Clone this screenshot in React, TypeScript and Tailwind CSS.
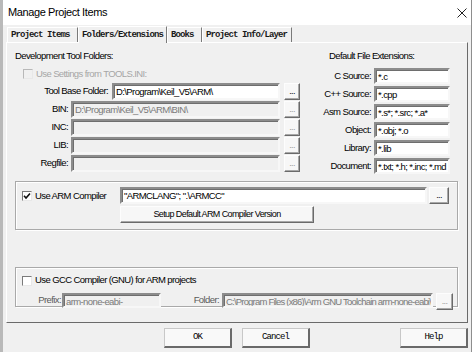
import React from 'react';

const sans = "font-['Liberation_Sans',Arial,sans-serif]";
const mono = "font-['Liberation_Mono','Courier_New',monospace]";

const field =
    "shrink-0 min-w-0 border-2 border-t-[#8c8c8c] border-l-[#8c8c8c] border-r-[#f7f7f7] border-b-[#f7f7f7] shadow-[inset_1px_1px_0_#6e6e6e] px-[2px] text-[9.5px] leading-[13px] tracking-[-0.6px] whitespace-nowrap overflow-hidden";
const fieldOn = field + " bg-white text-black";
const fieldOff = field + " bg-[#f0f0f0] text-[#7a7a7a]";

const dots =
    "shrink-0 flex items-center justify-center border border-t-[#fdfdfd] border-l-[#fdfdfd] border-r-[#6a6a6a] border-b-[#6a6a6a] shadow-[inset_-1px_-1px_0_#a8a8a8] bg-[#f7f7f7] text-[9px] leading-none";

const Check = ({ checked, disabled }: { checked?: boolean; disabled?: boolean }) => (
    <div
        className={`w-[10px] h-[10px] shrink-0 border border-t-[#7a7a7a] border-l-[#7a7a7a] border-r-[#e8e8e8] border-b-[#e8e8e8] flex items-center justify-center ${
            disabled ? 'bg-[#f0f0f0] border-t-[#b8b8b8] border-l-[#b8b8b8]' : 'bg-white'
        }`}
    >
        {checked && (
            <svg width="8" height="8" viewBox="0 0 8 8">
                <path d="M1 3.8 L3 6 L7 1.5" fill="none" stroke="#111" strokeWidth="1.6" />
            </svg>
        )}
    </div>
);

const folders = [
    { label: 'BIN:', value: 'D:\\Program\\Keil_V5\\ARM\\BIN\\' },
    { label: 'INC:', value: '' },
    { label: 'LIB:', value: '' },
    { label: 'Regfile:', value: '' },
];

const extensions = [
    { label: 'C Source:', value: '*.c' },
    { label: 'C++ Source:', value: '*.cpp' },
    { label: 'Asm Source:', value: '*.s*; *.src; *.a*' },
    { label: 'Object:', value: '*.obj; *.o' },
    { label: 'Library:', value: '*.lib' },
    { label: 'Document:', value: '*.txt; *.h; *.inc; *.md' },
];

const tabs = [
    { title: 'Project Items', w: 'w-[71px]' },
    { title: 'Folders/Extensions', w: 'w-[89px]', active: true },
    { title: 'Books', w: 'w-[35px]' },
    { title: 'Project Info/Layer', w: 'w-[90px]' },
];

const dlgButton =
    "w-[68px] h-[20px] flex items-center justify-center border border-t-[#c8c8c8] border-l-[#c8c8c8] border-r-2 border-b-2 border-r-[#6a6a6a] border-b-[#6a6a6a] bg-[#f9f9f9] text-[9px] tracking-[-0.9px] text-black";

export default function App() {
    return (
        <div className={`w-[474px] h-[352px] bg-white overflow-hidden ${sans}`}>
            <div className="w-[472px] h-[352px] flex flex-col bg-[#f0f0f0] border-l-[3px] border-l-[#b9b9b9] border-r border-r-[#8e8e8e]">
                {/* Title bar */}
                <div className="h-[25px] shrink-0 bg-white flex items-center justify-between pl-[5px] pr-[4px]">
                    <span className="text-[11px] tracking-[-0.4px] text-black">Manage Project Items</span>
                    <svg width="10" height="10" viewBox="0 0 10 10">
                        <path d="M0.5 0.5 L9.5 9.5 M9.5 0.5 L0.5 9.5" stroke="#222" strokeWidth="1" />
                    </svg>
                </div>

                {/* Tabs */}
                <div className="h-[17px] shrink-0 flex items-end pl-[4px] relative z-10">
                    {tabs.map((t) => (
                        <div
                            key={t.title}
                            className={`${t.w} flex items-center pl-[3px] pt-[1px] border-t border-l border-t-white border-l-white border-r border-r-[#7a7a7a] ${mono} font-bold text-[9px] tracking-[-0.9px] text-[#1a1a1a] ${
                                t.active ? 'h-[17px] -mb-[1px] bg-[#f0f0f0]' : 'h-[15px]'
                            }`}
                        >
                            {t.title}
                        </div>
                    ))}
                </div>

                {/* Panel */}
                <div className="ml-[3px] w-[462px] h-[281px] shrink-0 border border-t-white border-l-white border-r-[#6a6a6a] border-b-[#6a6a6a] flex flex-col text-[9.5px] tracking-[-0.6px] text-black">
                    <div className="h-[132px] flex">
                        {/* Development Tool Folders */}
                        <div className="w-[298px] flex flex-col">
                            <div className="mt-[7px] pl-[8px] leading-[12px]">Development Tool Folders:</div>
                            <div className="mt-[6px] pl-[16px] h-[12px] flex items-center gap-[3px] text-[#a6a6a6]">
                                <Check disabled />
                                <span>Use Settings from TOOLS.INI:</span>
                            </div>
                            <div className="mt-[3px] flex flex-col gap-[1px]">
                                <div className="flex items-center h-[17px]">
                                    <span className="w-[101px] shrink-0 text-right">Tool Base Folder:</span>
                                    <div className={`ml-[4px] w-[168px] h-[17px] ${fieldOn}`}>D:\Program\Keil_V5\ARM\</div>
                                    <div className={`ml-[4px] w-[16px] h-[17px] ${dots}`}>...</div>
                                </div>
                                {folders.map((f) => (
                                    <div key={f.label} className="flex items-center h-[17px]">
                                        <span className="w-[61px] shrink-0 text-right">{f.label}</span>
                                        <div className={`ml-[3px] w-[209px] h-[17px] ${fieldOff}`}>{f.value}</div>
                                        <div className={`ml-[4px] w-[16px] h-[17px] text-[#9a9a9a] ${dots}`}>...</div>
                                    </div>
                                ))}
                            </div>
                        </div>

                        {/* Default File Extensions */}
                        <div className="flex-1 flex flex-col">
                            <div className="mt-[7px] pl-[24px] leading-[12px]">Default File Extensions:</div>
                            <div className="mt-[6px] flex flex-col gap-[2px]">
                                {extensions.map((e) => (
                                    <div key={e.label} className="flex items-center h-[16px]">
                                        <span className="w-[66px] shrink-0 text-right">{e.label}</span>
                                        <div className={`ml-[3px] w-[76px] h-[16px] ${fieldOn}`}>{e.value}</div>
                                    </div>
                                ))}
                            </div>
                        </div>
                    </div>

                    {/* ARM compiler group */}
                    <div className="mt-[6px] ml-[8px] w-[443px] h-[49px] border border-[#a9a9a9] shadow-[inset_1px_1px_0_#fff,1px_1px_0_#fff] flex">
                        <div className="w-[104px] shrink-0 pl-[6px] pt-[9px] flex items-start gap-[3px]">
                            <Check checked />
                            <span className="leading-[10px]">Use ARM Compiler</span>
                        </div>
                        <div className="pt-[5px] flex flex-col gap-[2px]">
                            <div className="flex">
                                <div className={`w-[307px] h-[17px] ${fieldOn} bg-[#fbfbfb]`}>"ARMCLANG"; ".\ARMCC"</div>
                                <div className={`ml-[2px] w-[20px] h-[17px] ${dots}`}>...</div>
                            </div>
                            <div className={`w-[194px] h-[17px] ${dots} text-[9.5px] tracking-[-0.6px]`}>
                                Setup Default ARM Compiler Version
                            </div>
                        </div>
                    </div>

                    {/* GCC compiler group */}
                    <div className="mt-[37px] ml-[8px] w-[443px] h-[40px] border border-[#a9a9a9] shadow-[inset_1px_1px_0_#fff,1px_1px_0_#fff] flex flex-col">
                        <div className="mt-[7px] pl-[6px] h-[11px] flex items-center gap-[3px]">
                            <Check />
                            <span>Use GCC Compiler (GNU) for ARM projects</span>
                        </div>
                        <div className="mt-[5px] h-[15px] grid grid-cols-[45px_1px_99px_58px_3px_211px_3px_17px] items-center">
                            <span className="text-right text-[#5a5a5a]">Prefix:</span>
                            <span />
                            <div className={`h-[15px] ${fieldOff}`}>arm-none-eabi-</div>
                            <span className="text-right text-[#5a5a5a]">Folder:</span>
                            <span />
                            <div className={`h-[15px] ${fieldOff} px-[1px] tracking-[-0.8px]`}>
                                C:\Program Files (x86)\Arm GNU Toolchain arm-none-eabi\
                            </div>
                            <span />
                            <div className={`h-[17px] mt-[2px] text-[#9a9a9a] ${dots}`}>...</div>
                        </div>
                    </div>
                </div>

                {/* Dialog buttons */}
                <div className={`mt-[5px] flex ${mono}`}>
                    <div className={`ml-[161px] ${dlgButton}`}>OK</div>
                    <div className={`ml-[10px] ${dlgButton}`}>Cancel</div>
                    <div className={`ml-[90px] ${dlgButton}`}>Help</div>
                </div>
            </div>
        </div>
    );
}
